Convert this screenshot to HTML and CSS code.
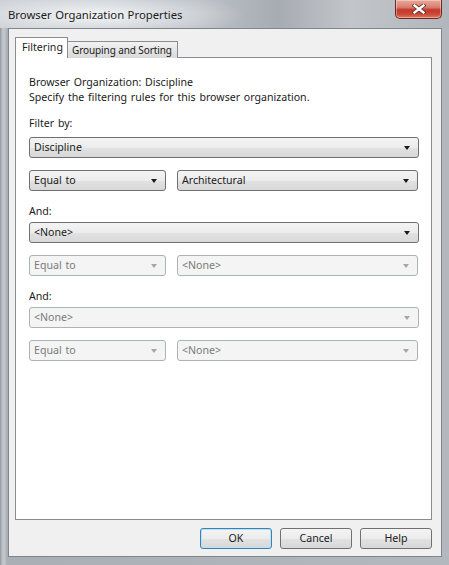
FILE: index.html
```html
<!DOCTYPE html>
<html>
<head>
<meta charset="utf-8">
<link rel="stylesheet" href="styles.css">
</head>
<body>
<div class="window">
  <div class="titlebar">
    <span class="title">Browser Organization Properties</span>
    <div class="close">
      <svg width="14" height="10" viewBox="0 0 14 10"><path d="M2.5 1.5 L11.5 8.5 M11.5 1.5 L2.5 8.5" stroke="#5a2a25" stroke-width="4" stroke-linecap="square"/><path d="M2.5 1.5 L11.5 8.5 M11.5 1.5 L2.5 8.5" stroke="#fff" stroke-width="2.4" stroke-linecap="square"/></svg>
    </div>
  </div>
  <div class="client">
    <div class="tabs">
      <div class="tab active">Filtering</div>
      <div class="tab second">Grouping and Sorting</div>
    </div>
    <div class="panel">
      <p class="desc">Browser Organization: Discipline<br>Specify the filtering rules for this browser organization.</p>
      <div class="label first">Filter by:</div>
      <div class="combo"><span>Discipline</span><i class="arrow"></i></div>
      <div class="pair">
        <div class="combo"><span>Equal to</span><i class="arrow"></i></div>
        <div class="combo"><span>Architectural</span><i class="arrow"></i></div>
      </div>
      <div class="label">And:</div>
      <div class="combo"><span>&lt;None&gt;</span><i class="arrow"></i></div>
      <div class="pair">
        <div class="combo disabled"><span>Equal to</span><i class="arrow"></i></div>
        <div class="combo disabled"><span>&lt;None&gt;</span><i class="arrow"></i></div>
      </div>
      <div class="label">And:</div>
      <div class="combo disabled"><span>&lt;None&gt;</span><i class="arrow"></i></div>
      <div class="pair">
        <div class="combo disabled"><span>Equal to</span><i class="arrow"></i></div>
        <div class="combo disabled"><span>&lt;None&gt;</span><i class="arrow"></i></div>
      </div>
    </div>
    <div class="buttons">
      <div class="btn default">OK</div>
      <div class="btn">Cancel</div>
      <div class="btn">Help</div>
    </div>
  </div>
</div>
</body>
</html>
```
FILE: styles.css
```css
* { box-sizing: border-box; }
html, body { margin: 0; padding: 0; }
body {
  width: 449px;
  height: 565px;
  overflow: hidden;
  font-family: "Noto Sans", "Open Sans", sans-serif;
  font-size: 10.6px;
  word-spacing: 1px;
  color: #1a1a1a;
}
.window {
  width: 449px;
  height: 565px;
  background: linear-gradient(90deg, #8f959c 0px, #b9bec4 2px, #c6cacf 4px, #a9afb5 7px, #b3b8be 100%);
  display: flex;
  flex-direction: column;
  padding: 0 7px 8px 8px;
}
.titlebar {
  height: 28px;
  position: relative;
  margin: 0 -7px 0 -8px;
  background:
    radial-gradient(ellipse 150px 24px at 95px 15px, rgba(255,255,255,0.8), rgba(255,255,255,0) 100%),
    linear-gradient(90deg, #c8cdd2 0%, #bcc1c7 45%, #a7acb2 62%, #c2c6cb 78%, #b1b6bc 100%);
}
.title {
  position: absolute;
  left: 8px;
  top: 7px;
  font-size: 11.3px;
  word-spacing: 0.5px;
  color: #1c1c1c;
  white-space: nowrap;
}
.close {
  position: absolute;
  left: 395px;
  top: 0;
  width: 47px;
  height: 19px;
  border: 1px solid #6e2a22;
  border-top: none;
  border-radius: 0 0 5px 5px;
  background: linear-gradient(180deg, #e9a898 0%, #d98070 40%, #c2372a 55%, #cc4a38 80%, #e07c62 100%);
  display: flex;
  align-items: center;
  justify-content: center;
  box-shadow: inset 0 0 0 1px rgba(255,255,255,0.35);
}
.client {
  flex: 1;
  background: #f0f0f0;
  border: 1px solid #7f858c;
  padding: 8px 9px 0 6px;
  display: flex;
  flex-direction: column;
}
.tabs {
  display: flex;
  align-items: flex-end;
  height: 21px;
  position: relative;
  z-index: 2;
  margin-bottom: -1px;
}
.tab {
  height: 17px;
  border: 1px solid #898c95;
  border-bottom: none;
  background: linear-gradient(180deg, #f2f2f2 0%, #e6e6e6 50%, #d9d9d9 100%);
  line-height: 16px;
  white-space: nowrap;
}
.tab.active {
  height: 21px;
  width: 53px;
  padding: 0 0 0 6px;
  background: #fff;
  line-height: 19px;
  position: relative;
  z-index: 3;
}
.tab.second {
  margin-left: -1px;
  padding-left: 4px;
  width: 111px;
  word-spacing: 0;
  font-size: 10px;
  letter-spacing: -0.1px;
}
.panel {
  height: 463px;
  background: #fff;
  border: 1px solid #898c95;
  padding: 17px 12px 0 13px;
}
.desc {
  margin: 0;
  line-height: 15px;
  white-space: nowrap;
}
.label {
  line-height: 15px;
  margin-top: 13px;
  margin-bottom: 3px;
}
.label.first { margin-top: 11px; margin-bottom: 6px; }
.combo {
  height: 21px;
  border: 1px solid #707070;
  border-radius: 3px;
  background: linear-gradient(180deg, #f4f4f4 0%, #ececec 50%, #e2e2e2 51%, #d8d8d8 100%);
  display: flex;
  align-items: center;
  padding: 0 8px 0 4px;
  line-height: 19px;
  white-space: nowrap;
}
.combo span { flex: 1; }
.arrow {
  width: 0; height: 0;
  border-left: 3.5px solid transparent;
  border-right: 3.5px solid transparent;
  border-top: 4px solid #1a1a1a;
}
.combo.disabled {
  background: #f4f4f4;
  border-color: #adb2b5;
  color: #7a7a7a;
}
.combo.disabled .arrow { border-top-color: #a6a6a6; }
.pair {
  display: grid;
  grid-template-columns: 137px 1fr;
  column-gap: 11px;
  margin-top: 12px;
}
.pair .combo:last-child { margin-right: 1px; }
.buttons {
  display: flex;
  justify-content: flex-end;
  gap: 8px;
  margin-top: 8px;
}
.btn {
  width: 72px;
  height: 21px;
  border: 1px solid #707070;
  border-radius: 3px;
  background: linear-gradient(180deg, #f4f4f4 0%, #ececec 50%, #e2e2e2 51%, #d8d8d8 100%);
  text-align: center;
  line-height: 19px;
}
.btn.default {
  border-color: #3c7fb1;
  box-shadow: inset 0 0 0 1px #b7e3f8;
}
```
